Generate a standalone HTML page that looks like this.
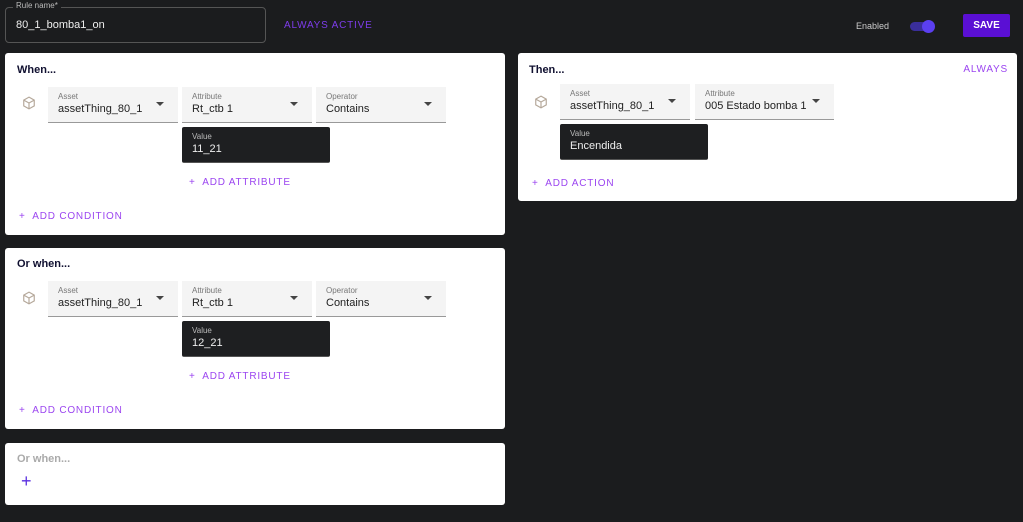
<!DOCTYPE html><html><head><style>
*{box-sizing:border-box;margin:0;padding:0}
body{width:1023px;height:522px;background:#1b1c1e;font-family:"Liberation Sans",sans-serif;position:relative;overflow:hidden}
.a{position:absolute}
.card{position:absolute;background:#fff;border-radius:3px}
.h{position:absolute;font-weight:bold;font-size:11px;color:#101030}
.f{position:absolute;background:#f4f4f4;border-bottom:1px solid #999;height:36px}
.f .l{position:absolute;left:10px;top:5px;font-size:8px;color:#777}
.f .v{position:absolute;left:10px;top:16px;font-size:11px;color:#222}
.f .ar{position:absolute;right:14px;top:15px;width:0;height:0;border-left:4px solid transparent;border-right:4px solid transparent;border-top:4px solid #444}
.val{position:absolute;background:#1e1f21;height:36px;border-radius:2px;border-bottom:1px solid #555}
.val .l{position:absolute;left:10px;top:5px;font-size:8px;color:#bbb}
.val .v{position:absolute;left:10px;top:16px;font-size:11px;color:#eee}
.btn{position:absolute;color:#9b45f0;font-size:10px;letter-spacing:.8px}
.ic{position:absolute}
</style></head><body>
<div class="a" style="left:5px;top:7px;width:261px;height:36px;border:1px solid #555;border-radius:4px"></div>
<div class="a" style="left:13px;top:1px;background:#1b1c1e;padding:0 3px;font-size:8px;color:#bbb">Rule name*</div>
<div class="a" style="left:16px;top:19px;font-size:11px;color:#eee">80_1_bomba1_on</div>
<div class="a" style="left:284px;top:20px;font-size:10px;color:#7d3cea;letter-spacing:.8px">ALWAYS ACTIVE</div>
<div class="a" style="left:856px;top:21px;font-size:9px;color:#ccc">Enabled</div>
<div class="a" style="left:910px;top:22px;width:22px;height:9px;border-radius:5px;background:#3a2e9a"></div>
<div class="a" style="left:922px;top:20px;width:13px;height:13px;border-radius:50%;background:#5b3ff0"></div>
<div class="a" style="left:963px;top:14px;width:47px;height:23px;background:#5a0fd4;border-radius:2px;color:#fff;font-size:10px;font-weight:bold;text-align:center;line-height:23px">SAVE</div>

<!-- card 1 -->
<div class="card" style="left:5px;top:53px;width:500px;height:182px">
<div class="h" style="left:12px;top:11px">When...</div>
<svg class="ic" style="left:17px;top:43px" width="14" height="14" viewBox="0 0 24 24" fill="none" stroke="#b5a89a" stroke-width="2"><path d="M12 2l9 5v10l-9 5-9-5V7z M3 7l9 5 9-5 M12 12v10"/></svg>
<div class="f" style="left:43px;top:34px;width:130px"><div class="l">Asset</div><div class="v">assetThing_80_1</div><div class="ar"></div></div>
<div class="f" style="left:177px;top:34px;width:130px"><div class="l">Attribute</div><div class="v">Rt_ctb 1</div><div class="ar"></div></div>
<div class="f" style="left:311px;top:34px;width:130px"><div class="l">Operator</div><div class="v">Contains</div><div class="ar"></div></div>
<div class="val" style="left:177px;top:74px;width:148px"><div class="l">Value</div><div class="v">11_21</div></div>
<div class="btn" style="left:184px;top:124px">+&nbsp; ADD ATTRIBUTE</div>
<div class="btn" style="left:14px;top:158px">+&nbsp; ADD CONDITION</div>
</div>
<!-- card 2 -->
<div class="card" style="left:5px;top:248px;width:500px;height:181px">
<div class="h" style="left:12px;top:10px">Or when...</div>
<svg class="ic" style="left:17px;top:43px" width="14" height="14" viewBox="0 0 24 24" fill="none" stroke="#b5a89a" stroke-width="2"><path d="M12 2l9 5v10l-9 5-9-5V7z M3 7l9 5 9-5 M12 12v10"/></svg>
<div class="f" style="left:43px;top:33px;width:130px"><div class="l">Asset</div><div class="v">assetThing_80_1</div><div class="ar"></div></div>
<div class="f" style="left:177px;top:33px;width:130px"><div class="l">Attribute</div><div class="v">Rt_ctb 1</div><div class="ar"></div></div>
<div class="f" style="left:311px;top:33px;width:130px"><div class="l">Operator</div><div class="v">Contains</div><div class="ar"></div></div>
<div class="val" style="left:177px;top:73px;width:148px"><div class="l">Value</div><div class="v">12_21</div></div>
<div class="btn" style="left:184px;top:123px">+&nbsp; ADD ATTRIBUTE</div>
<div class="btn" style="left:14px;top:157px">+&nbsp; ADD CONDITION</div>
</div>
<!-- card 3 -->
<div class="card" style="left:5px;top:443px;width:500px;height:62px">
<div class="h" style="left:12px;top:10px;color:#aaa">Or when...</div>
<div class="a" style="left:16px;top:28px;font-size:18px;color:#5a2fe0">+</div>
</div>
<!-- then -->
<div class="card" style="left:518px;top:53px;width:499px;height:148px">
<div class="h" style="left:11px;top:11px">Then...</div>
<div class="btn" style="right:9px;top:11px">ALWAYS</div>
<svg class="ic" style="left:16px;top:42px" width="14" height="14" viewBox="0 0 24 24" fill="none" stroke="#b5a89a" stroke-width="2"><path d="M12 2l9 5v10l-9 5-9-5V7z M3 7l9 5 9-5 M12 12v10"/></svg>
<div class="f" style="left:42px;top:31px;width:130px"><div class="l">Asset</div><div class="v">assetThing_80_1</div><div class="ar"></div></div>
<div class="f" style="left:177px;top:31px;width:139px"><div class="l">Attribute</div><div class="v">005 Estado bomba 1</div><div class="ar"></div></div>
<div class="val" style="left:42px;top:71px;width:148px"><div class="l">Value</div><div class="v">Encendida</div></div>
<div class="btn" style="left:14px;top:125px">+&nbsp; ADD ACTION</div>
</div>
</body></html>
